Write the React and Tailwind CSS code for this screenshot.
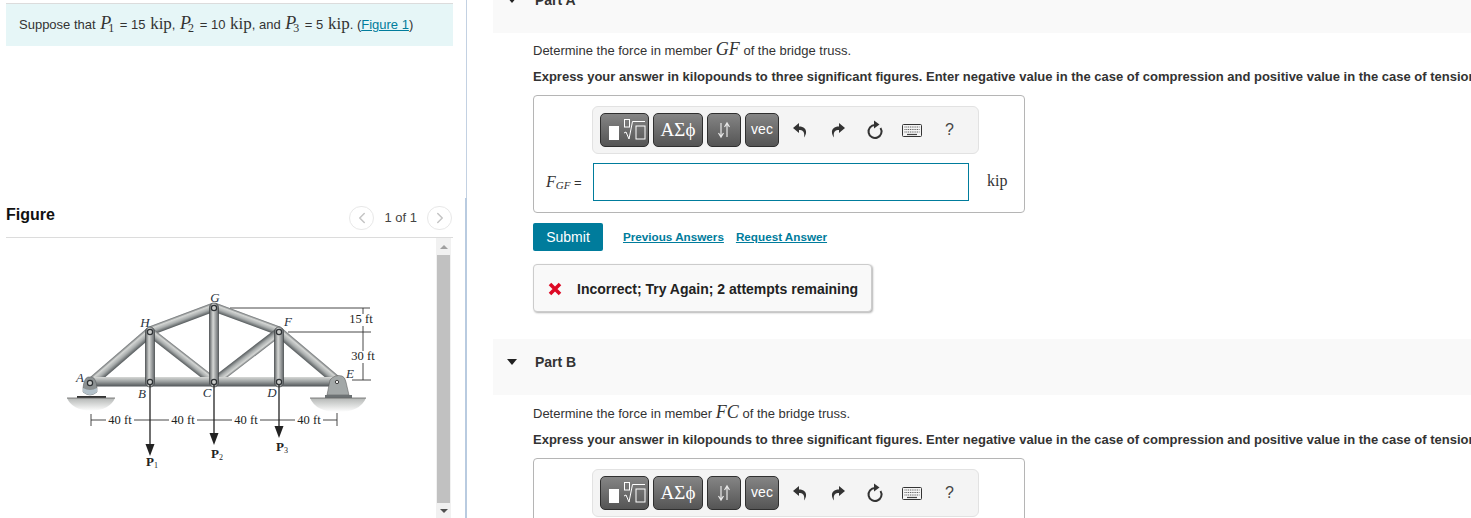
import React from 'react'
import { ChevronLeft, ChevronRight } from 'lucide-react'

const serif = "font-['Liberation_Serif',serif]"

function MathVar({ name, sub }) {
  return (
    <span className={`${serif} text-[18px] italic ml-[1px] mr-[2px]`}>
      {name}
      {sub && <span className="not-italic text-[12px] relative top-[3px] -ml-[3px]">{sub}</span>}
    </span>
  )
}

function Unit({ children }) {
  return <span className={`${serif} text-[17px] ml-[1px]`}>{children}</span>
}

// one steel member of the truss, shaded across its width
function Bar({ id, x1, y1, x2, y2, w = 9 }) {
  const len = Math.hypot(x2 - x1, y2 - y1)
  const nx = (-(y2 - y1) / len) * (w / 2)
  const ny = ((x2 - x1) / len) * (w / 2)
  const mx = (x1 + x2) / 2
  const my = (y1 + y2) / 2
  return (
    <g>
      <linearGradient id={id} gradientUnits="userSpaceOnUse" x1={mx - nx} y1={my - ny} x2={mx + nx} y2={my + ny}>
        <stop offset="0" stopColor="#6c7072" />
        <stop offset="0.25" stopColor="#d4d6d4" />
        <stop offset="0.6" stopColor="#a9adad" />
        <stop offset="1" stopColor="#565b5d" />
      </linearGradient>
      <line x1={x1} y1={y1} x2={x2} y2={y2} stroke={`url(#${id})`} strokeWidth={w} />
    </g>
  )
}

function Post({ x, y1, y2 }) {
  return (
    <g>
      <rect x={x - 4.5} y={y1 - 5} width="9" height={y2 - y1 + 10} rx="4.5" fill="url(#post)" stroke="#3f4345" strokeWidth="0.7" />
      <Pin x={x} y={y1} />
      <Pin x={x} y={y2} />
    </g>
  )
}

function Pin({ x, y }) {
  return <circle cx={x} cy={y} r="2.6" fill="#c9cbc9" stroke="#2d3134" strokeWidth="1.2" />
}

function Label({ x, y, children }) {
  return (
    <text x={x} y={y} fontFamily="Liberation Serif" fontStyle="italic" fontSize="13" fill="#2b3340" textAnchor="middle">
      {children}
    </text>
  )
}

function Dim({ x, y, children }) {
  return (
    <g>
      <rect x={x - 14} y={y - 9} width="28" height="12" fill="#fff" />
      <text x={x} y={y} fontFamily="Liberation Serif" fontSize="12.5" fill="#222" textAnchor="middle">
        {children}
      </text>
    </g>
  )
}

function Load({ x, y2, sub, lx, ly }) {
  return (
    <g>
      <line x1={x} y1={105} x2={x} y2={y2 - 8} stroke="#222" strokeWidth="1.3" />
      <polygon points={`${x - 4.5},${y2 - 11} ${x + 4.5},${y2 - 11} ${x},${y2 + 1}`} fill="#222" />
      <text x={lx} y={ly} fontFamily="Liberation Serif" fontWeight="bold" fontSize="13" fill="#222" textAnchor="middle">
        P
        <tspan fontSize="8" fontWeight="normal" dy="2">{sub}</tspan>
      </text>
    </g>
  )
}

function Truss() {
  return (
    <svg width="340" height="200" viewBox="0 0 340 200">
      <defs>
        <linearGradient id="chord" x1="0" y1="0" x2="0" y2="1">
          <stop offset="0" stopColor="#d6d8d6" />
          <stop offset="0.45" stopColor="#a0a4a4" />
          <stop offset="1" stopColor="#4f5457" />
        </linearGradient>
        <linearGradient id="post" x1="0" y1="0" x2="1" y2="0">
          <stop offset="0" stopColor="#5f6365" />
          <stop offset="0.4" stopColor="#d6d8d6" />
          <stop offset="1" stopColor="#63676a" />
        </linearGradient>
        <linearGradient id="ground" x1="0" y1="0" x2="0" y2="1">
          <stop offset="0" stopColor="#b4b7b5" />
          <stop offset="1" stopColor="#ffffff" />
        </linearGradient>
      </defs>

      <path d="M17 118 H65 Q60 130 41 131 Q22 130 17 118 Z" fill="url(#ground)" />
      <path d="M260 118 H316 Q310 132 288 132 Q266 132 260 118 Z" fill="url(#ground)" />

      <line x1="180" y1="28" x2="320" y2="28" stroke="#333" strokeWidth="0.9" />
      <line x1="238" y1="52" x2="321" y2="52" stroke="#333" strokeWidth="0.9" />
      <line x1="302" y1="100" x2="321" y2="100" stroke="#333" strokeWidth="0.9" />
      <line x1="313" y1="28" x2="313" y2="100" stroke="#333" strokeWidth="0.9" />

      <Bar id="m1" x1={42} y1={102} x2={100} y2={52} w={10} />
      <Bar id="m2" x1={100} y1={51} x2={164} y2={27} />
      <Bar id="m3" x1={164} y1={27} x2={229} y2={51} />
      <Bar id="m4" x1={229} y1={52} x2={287} y2={101} w={10} />
      <Bar id="m5" x1={100} y1={52} x2={164} y2={102} />
      <Bar id="m6" x1={229} y1={52} x2={164} y2={102} />
      <rect x="42" y="97" width="245" height="9.5" fill="url(#chord)" />

      <Post x={100} y1={52} y2={102} />
      <Post x={164} y1={28} y2={102} />
      <Post x={229} y1={52} y2={102} />

      {/* left rocker */}
      <path d="M33 108 Q34 98 38 97 L42 97 Q46 98 47 108 L47 112 Q40 118 33 112 Z" fill="#8c9192" stroke="#55595b" strokeWidth="0.5" />
      <path d="M33 108 Q40 112 47 108 L47 112 Q40 118 33 112 Z" fill="#b4c2cb" />
      <Pin x={40} y={103} />
      <rect x="27" y="116" width="29" height="2" fill="#333" />
      <line x1="17" y1="118" x2="65" y2="118" stroke="#666" strokeWidth="0.8" />

      {/* right support */}
      <path d="M277 115 L280 100 Q285 94 292 96 Q295 97 296 102 L299 115 Z" fill="#a3a8a8" stroke="#555" strokeWidth="0.5" />
      <rect x="275" y="115" width="27" height="3" fill="#6d7274" />
      <circle cx="287" cy="102" r="1.7" fill="#eee" stroke="#333" strokeWidth="0.9" />
      <line x1="260" y1="118" x2="316" y2="118" stroke="#666" strokeWidth="0.8" />

      <line x1="41" y1="134" x2="41" y2="146" stroke="#333" strokeWidth="0.9" />
      <line x1="41" y1="140" x2="287" y2="140" stroke="#333" strokeWidth="0.9" />
      <line x1="287" y1="133" x2="287" y2="146" stroke="#333" strokeWidth="0.9" />

      <Load x={100} y2={175} sub="1" lx={102} ly={186} />
      <Load x={164} y2={164} sub="2" lx={167} ly={178} />
      <Load x={229} y2={157} sub="3" lx={232} ly={171} />

      <Dim x={70} y={144}>40 ft</Dim>
      <Dim x={133} y={144}>40 ft</Dim>
      <Dim x={196} y={144}>40 ft</Dim>
      <Dim x={259} y={144}>40 ft</Dim>
      <Dim x={311} y={43}>15 ft</Dim>
      <Dim x={313} y={80}>30 ft</Dim>

      <Label x={30} y={102}>A</Label>
      <Label x={92} y={118}>B</Label>
      <Label x={157} y={117}>C</Label>
      <Label x={222} y={117}>D</Label>
      <Label x={300} y={98}>E</Label>
      <Label x={238} y={46}>F</Label>
      <Label x={165} y={22}>G</Label>
      <Label x={95} y={47}>H</Label>
    </svg>
  )
}

function LeftPanel() {
  return (
    <div className="w-[465px] shrink-0 pl-[6px] pr-[12px] flex flex-col h-[518px]">
      <div className="mt-[3px] h-[43px] bg-[#e6f6f7] border-t border-[#dcdcdc] pl-[13px] pb-[3px] flex items-center text-[13px] text-[#333] whitespace-nowrap">
        <span>
          Suppose that <MathVar name="P" sub="1" /> = 15 <Unit>kip</Unit>, <MathVar name="P" sub="2" /> = 10 <Unit>kip</Unit>, and <MathVar name="P" sub="3" /> = 5 <Unit>kip</Unit>. (<a className="text-[#007c9c] underline">Figure 1</a>)
        </span>
      </div>

      <div className="mt-[159px] h-[33px] border-b border-[#dcdcdc] flex items-start justify-between">
        <h2 className="text-[16px] font-bold text-[#111] leading-[20px]">Figure</h2>
        <div className="flex items-center gap-[10px] mt-[1px] pr-[1px] text-[13px] text-[#444]">
          <span className="w-[25px] h-[24px] rounded-full border border-[#e8e8e8] flex items-center justify-center">
            <ChevronLeft size={18} strokeWidth={2} className="text-[#c4c4c4]" />
          </span>
          <span>1 of 1</span>
          <span className="w-[25px] h-[24px] rounded-full border border-[#e8e8e8] flex items-center justify-center">
            <ChevronRight size={18} strokeWidth={2} className="text-[#c4c4c4]" />
          </span>
        </div>
      </div>

      <div className="flex-1 flex pr-[2px] min-h-0">
        <div className="flex-1 pl-[44px] pt-[42px] overflow-hidden">
          <Truss />
        </div>
        <div className="w-[15px] bg-[#f1f1f1] flex flex-col items-center">
          <div className="h-[17px] flex items-center">
            <div className="w-0 h-0 border-x-[4px] border-x-transparent border-b-[4px] border-b-[#a0a0a0]" />
          </div>
          <div className="w-[13px] flex-1 bg-[#c1c1c1]" />
          <div className="h-[15px] flex items-center">
            <div className="w-0 h-0 border-x-[4px] border-x-transparent border-t-[4px] border-t-[#505050]" />
          </div>
        </div>
      </div>
    </div>
  )
}

function ToolButton({ className, children }) {
  return (
    <div className={`h-[34px] rounded-[5px] border border-[#2f2f2f] bg-gradient-to-b from-[#858585] to-[#555555] flex items-center justify-center text-white ${className}`}>
      {children}
    </div>
  )
}

function Toolbar() {
  return (
    <div className="ml-[58px] w-[387px] h-[48px] rounded-[6px] border border-[#e2e2e2] bg-[#f4f4f4] flex items-center pl-[7px] text-[#333]">
      <ToolButton className="w-[49px] mr-[4px]">
        <svg width="44" height="30" viewBox="0 0 44 30" fill="none">
          <rect x="6" y="11" width="10" height="14" fill="#fff" />
          <rect x="21.5" y="4.5" width="5" height="7.5" stroke="#fff" strokeWidth="1" />
          <path d="M21 18 L23 17 L26 24 L29.5 6.5 H42" stroke="#fff" strokeWidth="1" />
          <rect x="33" y="11" width="9" height="13" stroke="#fff" strokeWidth="1" />
        </svg>
      </ToolButton>
      <ToolButton className={`w-[50px] mr-[4px] ${serif} text-[19px]`}>ΑΣϕ</ToolButton>
      <ToolButton className="w-[34px] mr-[4px]">
        <svg width="16" height="18" viewBox="0 0 16 18" fill="none" stroke="#e8e8e8" strokeWidth="1.2">
          <path d="M5 2 V15 M2.5 12 L5 16 L7.5 12" />
          <path d="M11 16 V3 M8.5 6 L11 2 L13.5 6" />
        </svg>
      </ToolButton>
      <ToolButton className="w-[34px] text-[14px] pb-[1px]">vec</ToolButton>
      <svg width="14" height="16" viewBox="0 0 14 16" className="ml-[14px]">
        <path d="M6 1 L0 6 L6 11 V8 C10 8 12 10 11 15.5 C14.5 11 14 4.5 6 4.5 Z" fill="#333" />
      </svg>
      <svg width="14" height="16" viewBox="0 0 14 16" className="ml-[24px] -scale-x-100">
        <path d="M6 1 L0 6 L6 11 V8 C10 8 12 10 11 15.5 C14.5 11 14 4.5 6 4.5 Z" fill="#333" />
      </svg>
      <svg width="18" height="20" viewBox="0 0 18 20" fill="none" className="ml-[21px]">
        <path d="M9 5 A6.5 6.5 0 1 0 14.5 8" stroke="#333" strokeWidth="2" />
        <polygon points="8,0.5 8,8.5 13.5,4.5" fill="#333" />
      </svg>
      <svg width="20" height="13" viewBox="0 0 20 13" className="ml-[18px]">
        <rect x="0.5" y="0.5" width="19" height="12" rx="1" fill="#f4f4f4" stroke="#333" />
        <path d="M2.5 3 H17.5 M2.5 5.5 H17.5 M2.5 8 H17.5" stroke="#555" strokeWidth="1.2" strokeDasharray="1 0.8" />
        <path d="M5 10.5 H15" stroke="#444" strokeWidth="1.2" />
      </svg>
      <span className="ml-[23px] text-[16px] text-[#444]">?</span>
    </div>
  )
}

function AnswerBox({ symbol, sub }) {
  return (
    <div className="mt-[5px] w-[492px] h-[118px] shrink-0 rounded-[4px] border border-[#b5b5b5] pt-[10px]">
      <Toolbar />
      <div className="mt-[9px] flex items-center">
        <div className="w-[59px] pl-[12px] text-[13px] text-[#333] whitespace-nowrap">
          <span className={`${serif} italic text-[16px]`}>{symbol}</span>
          <span className={`${serif} italic text-[11px] relative top-[2px]`}>{sub}</span>
          <span> =</span>
        </div>
        <div className="w-[376px] h-[38px] border border-[#007c9c] bg-white" />
        <span className={`ml-[18px] -mt-[2px] ${serif} text-[16px] text-[#333]`}>kip</span>
      </div>
    </div>
  )
}

function PartHeader({ title }) {
  return (
    <div className="h-[56px] shrink-0 bg-[#f9f9f9] flex items-center pl-[14px] pb-[10px]">
      <div className="w-0 h-0 border-x-[5px] border-x-transparent border-t-[6px] border-t-[#222]" />
      <span className="ml-[18px] text-[14px] font-bold text-[#333]">{title}</span>
    </div>
  )
}

function Question({ symbol, className }) {
  return (
    <div className={`pl-[40px] text-[#333] whitespace-nowrap ${className}`}>
      <p className="h-[28px] text-[13px] leading-[26px]">
        Determine the force in member <span className={`${serif} italic text-[18px]`}>{symbol}</span> of the bridge truss.
      </p>
      <p className="h-[26px] text-[13px] font-bold leading-[26px]">
        Express your answer in kilopounds to three significant figures. Enter negative value in the case of compression and positive value in the case of tension
      </p>
    </div>
  )
}

export default function App() {
  return (
    <div className="h-[518px] overflow-hidden flex bg-white font-['Liberation_Sans',Arial,sans-serif]">
      <LeftPanel />
      <div className="w-[2px] shrink-0 flex flex-col">
        <div className="h-[198px] ml-[1px] w-[1px] bg-[#c3d1e2]" />
        <div className="flex-1 bg-[#b9cbe0]" />
      </div>
      <div className="flex-1 min-w-0 pl-[26px] -mt-[23px] h-[541px] overflow-hidden flex flex-col">
        <PartHeader title="Part A" />
        <Question symbol="GF" className="mt-[3px]" />
        <div className="pl-[40px]">
          <AnswerBox symbol="F" sub="GF" />
          <div className="mt-[10px] flex items-center">
            <button className="w-[70px] h-[28px] rounded-[2px] bg-[#007c9c] text-white text-[14px]">Submit</button>
            <a className="ml-[20px] text-[11.7px] font-bold text-[#007c9c] underline">Previous Answers</a>
            <a className="ml-[12px] text-[11.7px] font-bold text-[#007c9c] underline">Request Answer</a>
          </div>
          <div className="mt-[13px] w-[339px] h-[48px] rounded-[4px] border border-[#cccccc] bg-[#f9f9f9] shadow-[1px_1px_2px_rgba(0,0,0,0.3)] flex items-center pl-[14px] pt-[2px]">
            <svg width="14" height="14" viewBox="0 0 14 14" fill="none">
              <path d="M2 2 L12 12 M12 2 L2 12" stroke="#dd0a25" strokeWidth="3.6" />
            </svg>
            <span className="ml-[15px] text-[14px] font-bold text-[#222] whitespace-nowrap">Incorrect; Try Again; 2 attempts remaining</span>
          </div>
        </div>
        <div className="mt-[27px]">
          <PartHeader title="Part B" />
        </div>
        <Question symbol="FC" className="mt-[4px]" />
        <div className="pl-[40px]">
          <AnswerBox symbol="F" sub="FC" />
        </div>
      </div>
    </div>
  )
}
